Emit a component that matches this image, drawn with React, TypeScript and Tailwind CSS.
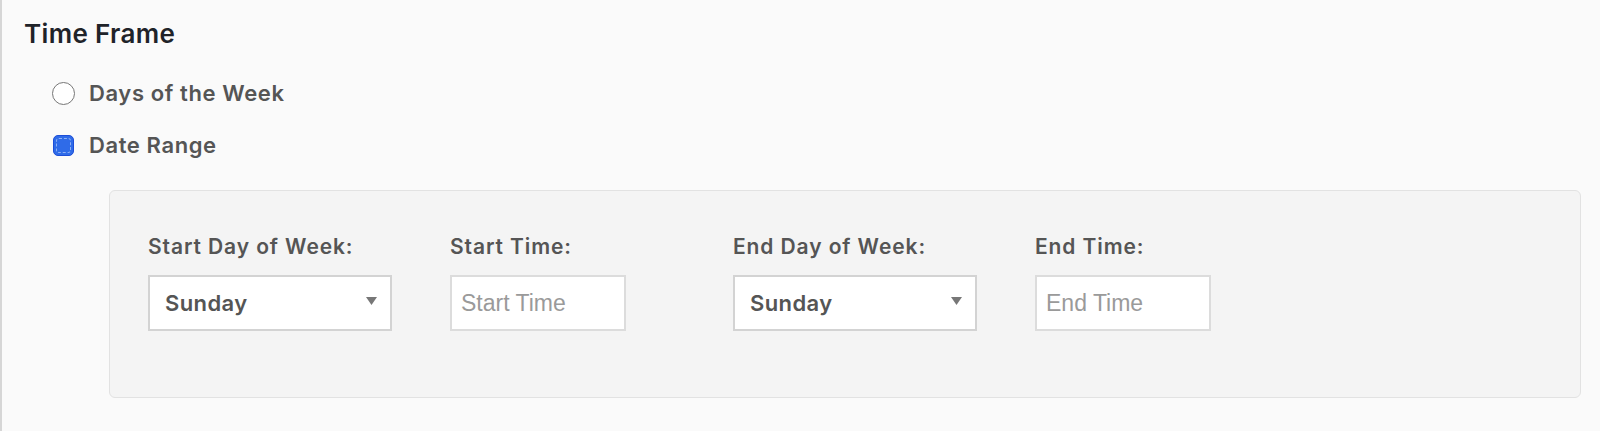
import React from "react";

function DaySelect() {
  return (
    <div className="relative w-[244px]">
      <select
        defaultValue="Sunday"
        className="h-[56px] w-full appearance-none border-2 border-[#d3d3d3] bg-white pl-[15px] text-[22px] font-semibold tracking-[0.4px] text-[#555] outline-none"
      >
        {["Sunday", "Monday", "Tuesday", "Wednesday", "Thursday", "Friday", "Saturday"].map((d) => (
          <option key={d}>{d}</option>
        ))}
      </select>
      <svg className="pointer-events-none absolute right-[15px] top-[22px] h-[8px] w-[11px]" viewBox="0 0 11 8">
        <path d="M0 0h11L5.5 8z" fill="#777" />
      </svg>
    </div>
  );
}

function TimeInput({ placeholder }: { placeholder: string }) {
  return (
    <input
      type="text"
      placeholder={placeholder}
      className="h-[56px] w-[176px] border-2 border-[#dcdcdc] bg-white pl-[9px] font-['Liberation_Sans',Arial,sans-serif] text-[23px] text-[#555] outline-none placeholder:text-[#9a9a9a]"
    />
  );
}

function Field({ label, width, children }: { label: string; width: string; children: React.ReactNode }) {
  return (
    <div className={width}>
      <div className="mb-[14px] text-[21px] leading-[28px] font-semibold tracking-[0.9px] text-[#555]">{label}</div>
      {children}
    </div>
  );
}

export default function App() {
  return (
    <div className="min-h-[431px] border-l-2 border-[#d6d6d6] bg-[#fafafa] pl-[22px] pt-[18px] pr-[19px] font-['Inter',sans-serif]">
      <h2 className="text-[26px] leading-[32px] font-semibold tracking-[0.35px] text-[#1f2329]">Time Frame</h2>

      <div className="mt-[29px] flex flex-col gap-[24px] pl-[28px]">
        <label className="flex items-center gap-[14px]">
          <span className="h-[23px] w-[23px] rounded-full border-[1.5px] border-[#777] bg-white" />
          <span className="text-[22px] leading-[28px] font-semibold tracking-[0.6px] text-[#555]">Days of the Week</span>
        </label>
        <label className="flex items-center gap-[15px]">
          <span className="ml-[1px] flex h-[21px] w-[21px] items-center justify-center rounded-[5px] border border-[#1d4ed8] bg-[#2f6be8]">
            <span className="h-[15px] w-[15px] rounded-[3px] border border-dashed border-[#8fb0f5]" />
          </span>
          <span className="text-[22px] leading-[28px] font-semibold tracking-[0.6px] text-[#555]">Date Range</span>
        </label>
      </div>

      <div className="ml-[85px] mt-[31px] h-[208px] rounded-[6px] border border-[#e2e2e2] bg-[#f4f4f4] pl-[38px] pt-[42px]">
        <div className="flex">
          <Field label="Start Day of Week:" width="w-[302px]">
            <DaySelect />
          </Field>
          <Field label="Start Time:" width="w-[283px]">
            <TimeInput placeholder="Start Time" />
          </Field>
          <Field label="End Day of Week:" width="w-[302px]">
            <DaySelect />
          </Field>
          <Field label="End Time:" width="w-[283px]">
            <TimeInput placeholder="End Time" />
          </Field>
        </div>
      </div>
    </div>
  );
}
